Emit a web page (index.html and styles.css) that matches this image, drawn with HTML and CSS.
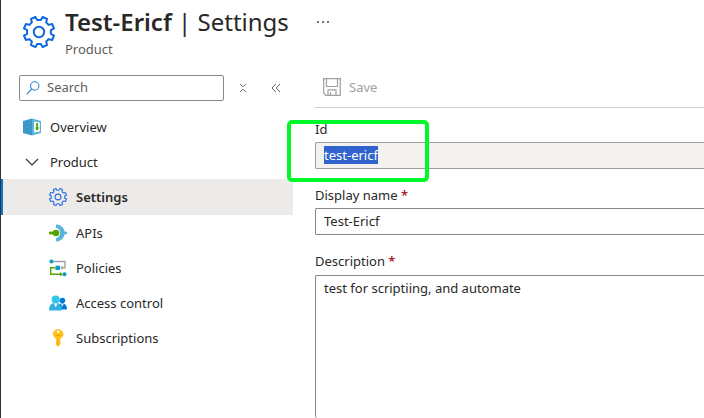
FILE: index.html
```html
<!DOCTYPE html>
<html lang="en">
<head>
<meta charset="utf-8">
<title>Test-Ericf | Settings</title>
<link rel="stylesheet" href="styles.css">
</head>
<body>
<svg width="0" height="0" class="defs" aria-hidden="true">
  <symbol id="gear" viewBox="-16 -16 32 32">
    <path d="M11.9 1.8 15 3.6 13.1 8 9.6 7.1 7.1 9.6 8 13.1 3.6 15 1.8 11.9H-1.8L-3.6 15-8 13.1-7.1 9.6-9.6 7.1-13.1 8-15 3.6-11.9 1.8V-1.8L-15-3.6-13.1-8-9.6-7.1-7.1-9.6-8-13.1-3.6-15-1.8-11.9H1.8L3.6-15 8-13.1 7.1-9.6 9.6-7.1 13.1-8 15-3.6 11.9-1.8Z" fill="none" stroke="currentColor" stroke-linejoin="round"/>
    <circle r="5.2" fill="none" stroke="currentColor"/>
  </symbol>
</svg>
<div class="blade">
  <header class="header">
    <svg class="header-icon"><use href="#gear"/></svg>
    <div>
      <div class="title-row">
        <h1><b>Test-Ericf</b> | Settings</h1>
        <button class="more" aria-label="More"><svg width="14" height="4" viewBox="0 0 14 4" fill="#444"><circle cx="2" cy="2" r="1"/><circle cx="7" cy="2" r="1"/><circle cx="12" cy="2" r="1"/></svg></button>
      </div>
      <p class="subtitle">Product</p>
    </div>
  </header>
  <div class="body">
    <aside class="sidebar">
      <div class="search-row">
        <label class="search">
          <svg width="14" height="14" viewBox="0 0 14 14" fill="none" stroke="#2f86d6" stroke-width="1.1"><circle cx="8.7" cy="5" r="4.2"/><path d="M5.7 8 .6 13.3"/></svg>
          <input type="text" placeholder="Search" aria-label="Search">
        </label>
        <button class="tool" aria-label="Collapse groups"><svg width="8" height="10" viewBox="0 0 8 10" fill="none" stroke="#605e5c"><path d="m1 .8 3 3 3-3M1 9.2l3-3 3 3"/></svg></button>
        <button class="tool" aria-label="Hide menu"><svg width="10" height="10" viewBox="0 0 10 10" fill="none" stroke="#605e5c"><path d="M4.8 1 1 5l3.8 4M9 1 5.2 5 9 9"/></svg></button>
      </div>
      <nav>
        <a class="item" href="#overview">
          <svg width="18" height="18" viewBox="0 0 18 18"><path d="M0 3 9 .5V17.5L0 15Z" fill="#3b98c6"/><path d="M9 .5 18 3V15L9 17.5Z" fill="#59b4d9"/><path d="M11 3.6 16.8 4.5V13.5L11 14.6Z" fill="#fff"/><path d="M13.2 5h1.8v4.600h1.200L14.100 13 12 9.600h1.200Z" fill="#57a300"/></svg>
          Overview
        </a>
        <button class="item">
          <svg width="18" height="18" viewBox="0 0 18 18" fill="none" stroke="#333" stroke-width="1.2"><path d="m3 6 6 6 6-6"/></svg>
          Product
        </button>
        <a class="item sub active" href="#settings" aria-current="page">
          <svg class="gear-small" width="18" height="18"><use href="#gear"/></svg>
          Settings
        </a>
        <a class="item sub" href="#apis">
          <svg width="18" height="18" viewBox="0 0 18 18"><path d="M7 .5A8.5 8.5 0 0 1 15.7 7.7H18v2.6H15.7A8.5 8.5 0 0 1 7 17.5V14A5.1 5.1 0 0 0 7 4Z" fill="#59b4d9"/><path d="M0 7.6H6v2.8H0Z" fill="#57a300"/><circle cx="7" cy="9" r="3.3" fill="#57a300"/></svg>
          APIs
        </a>
        <a class="item sub" href="#policies">
          <svg width="18" height="18" viewBox="0 0 18 18" fill="none" stroke-width="1.4"><path d="M4 2.500H16V8.800H13" stroke="#a0a1a2"/><path d="m13.800 6.500-2.600 2.300 2.600 2.300Z" fill="#a0a1a2"/><path d="M6.500 8.800H1.700V15.200H12" stroke="#57a300"/><path d="m11 12.900 2.800 2.300-2.800 2.300Z" fill="#57a300"/><circle cx="2.400" cy="2.500" r="2" fill="#0f9bc8"/><circle cx="15.500" cy="15.200" r="2" fill="#0f9bc8"/><path d="M6.500 6.700h4.500v4.300H6.500Z" fill="#0f9bc8"/></svg>
          Policies
        </a>
        <a class="item sub" href="#access">
          <svg width="18" height="18" viewBox="0 0 18 18"><path d="M9.5 15.5C9 11.5 10.5 9.6 13.3 9.6S17.800 11.5 18 14.800c0 .5-.4.8-.9.8Z" fill="#0078d4"/><path d="m12 9.600 1.300 3.200 1.400-3.200Z" fill="#fff"/><circle cx="13.400" cy="6.600" r="2.800" fill="#0078d4"/><path d="M0 15.500C.2 11.200 2.500 8.700 6.600 8.700s6.200 2.500 6.500 6.800c0 .6-.4 1-1 1H1c-.6 0-1-.4-1-1Z" fill="#2fb1e3"/><path d="m4.700 8.900 2 4.600 2-4.600Z" fill="#fff"/><circle cx="6.700" cy="5.400" r="4" fill="#32c5ea"/></svg>
          Access control
        </a>
        <a class="item sub" href="#subscriptions">
          <svg width="18" height="18" viewBox="0 0 18 18"><path fill-rule="evenodd" d="M6.300.7Q9-.5 11.700.7L14 3.200Q15 5.500 13.800 7.500L11 10.200V11.200L12 12.200 11 13.300 12 14.400 9.300 17.800 7.200 16V10.200L4.600 7.500Q3.300 5.500 4.200 3.200ZM9.200 1.400A1.300 1.300 0 1 0 9.200 4 1.300 1.300 0 1 0 9.200 1.400Z" fill="#ffc21a"/><path d="M8.500 10v6.300M6.500 6.500h5.400" stroke="#f5a300" fill="none"/></svg>
          Subscriptions
        </a>
      </nav>
    </aside>
    <main class="main">
      <div class="toolbar">
        <button class="save" disabled>
          <svg width="18" height="18" viewBox="0 0 18 18" fill="none" stroke="#a19f9d" stroke-width="1.2"><path d="M.7.7H17.3V17.3H3L.7 15Z"/><path d="M3.5 1V8.500H14.500V1M5 17V11.800H13V17M7.500 14V17"/></svg>
          Save
        </button>
      </div>
      <form class="form">
        <div class="field">
          <label for="pid">Id</label>
          <input id="pid" class="readonly" type="text" value="test-ericf" readonly>
          <span class="marker"></span>
        </div>
        <div class="field">
          <label for="pname">Display name <i>*</i></label>
          <input id="pname" type="text" value="Test-Ericf">
        </div>
        <div class="field grow">
          <label for="pdesc">Description <i>*</i></label>
          <textarea id="pdesc">test for scriptiing, and automate</textarea>
        </div>
      </form>
    </main>
  </div>
</div>
<script src="app.js"></script>
</body>
</html>
```
FILE: styles.css
```css
* { box-sizing: border-box; }
body {
  margin: 0;
  background: #fff;
  color: #292827;
  font: 13px/20px "Segoe UI", "Noto Sans", sans-serif;
}
button, input, textarea { font: inherit; color: inherit; }
button { border: 0; padding: 0; background: none; }
svg { display: block; flex: none; }
.defs { position: absolute; }

.blade {
  display: flex;
  flex-direction: column;
  height: 100vh;
  border-left: 1px solid #323130;
  overflow: hidden;
}

.header {
  display: flex;
  gap: 10px;
  padding: 6px 0 0 22px;
  height: 69px;
}
.header-icon {
  width: 32px;
  height: 32px;
  margin-top: 10px;
  color: #1068dc;
  stroke-width: 2;
}
.title-row { display: flex; gap: 27px; align-items: center; }
h1 { margin: 0; font-size: 24px; line-height: 32px; font-weight: 400; }
h1 b { font-weight: 600; }
.subtitle { margin: 2px 0 0; color: #605e5c; line-height: 18px; }

.body { display: flex; flex: 1; min-height: 0; }
.sidebar { flex: 0 0 292px; min-width: 0; }
.search-row { display: flex; align-items: center; padding: 6px 0 8px 18px; }
.search {
  display: flex;
  flex: none;
  align-items: center;
  gap: 7px;
  width: 205px;
  height: 26px;
  margin-right: 15px;
  padding-left: 6px;
  border: 1px solid #8a8886;
  border-radius: 2px;
}
.search input { width: 100%; min-width: 0; height: 20px; margin-bottom: 2px; border: 0; padding: 0; outline: 0; background: none; }
.search input::placeholder { color: #605e5c; opacity: 1; }
.tool { display: flex; margin-right: 24px; }

.item {
  display: flex;
  align-items: center;
  gap: 9px;
  width: 100%;
  height: 35px;
  padding-left: 22px;
  color: inherit;
  text-decoration: none;
}
.item.sub { padding-left: 48px; }
.item.active {
  height: 36px;
  padding-left: 46px;
  border-left: 2px solid #0078d4;
  background: #edebe9;
  font-weight: 600;
}
.gear-small { color: #2a6fe0; stroke-width: 2; }

.main { display: flex; flex-direction: column; flex: 1; min-width: 0; padding-left: 22px; }
.toolbar { display: flex; height: 39px; border-bottom: 1px solid #d2d0ce; }
.save { display: flex; align-items: center; gap: 8px; height: 36px; padding-left: 8px; color: #a19f9d; }

.form { display: flex; flex-direction: column; flex: 1; padding-top: 11px; }
.field { position: relative; display: flex; flex-direction: column; height: 66px; }
.field.grow { flex: 1; }
.field label { line-height: 20px; margin-bottom: 3px; }
.field i { color: #a4262c; font-style: normal; font-weight: 600; }
.field input, .field textarea {
  width: 100%;
  border: 1px solid #8a8886;
  border-right: 0;
  border-radius: 2px 0 0 2px;
  padding: 0 8px;
  background: #fff;
  outline: 0;
}
.field input { height: 27px; padding-bottom: 2px; }
.field textarea { flex: 1; margin-top: 1px; padding-top: 2px; border-bottom: 0; resize: none; }
.field .readonly { background: #f3f2f1; border-color: #a19f9d; }
.readonly::selection { background: #3163ce; color: #fff; }

/* highlight frame drawn over the id field */
.marker {
  position: absolute;
  top: 1px;
  left: -28px;
  width: 142px;
  height: 62px;
  border: 4px solid #00f72a;
  border-radius: 5px;
  pointer-events: none;
}
```
FILE: app.js
```js
const id = document.getElementById("pid");
id.focus();
id.select();
```
